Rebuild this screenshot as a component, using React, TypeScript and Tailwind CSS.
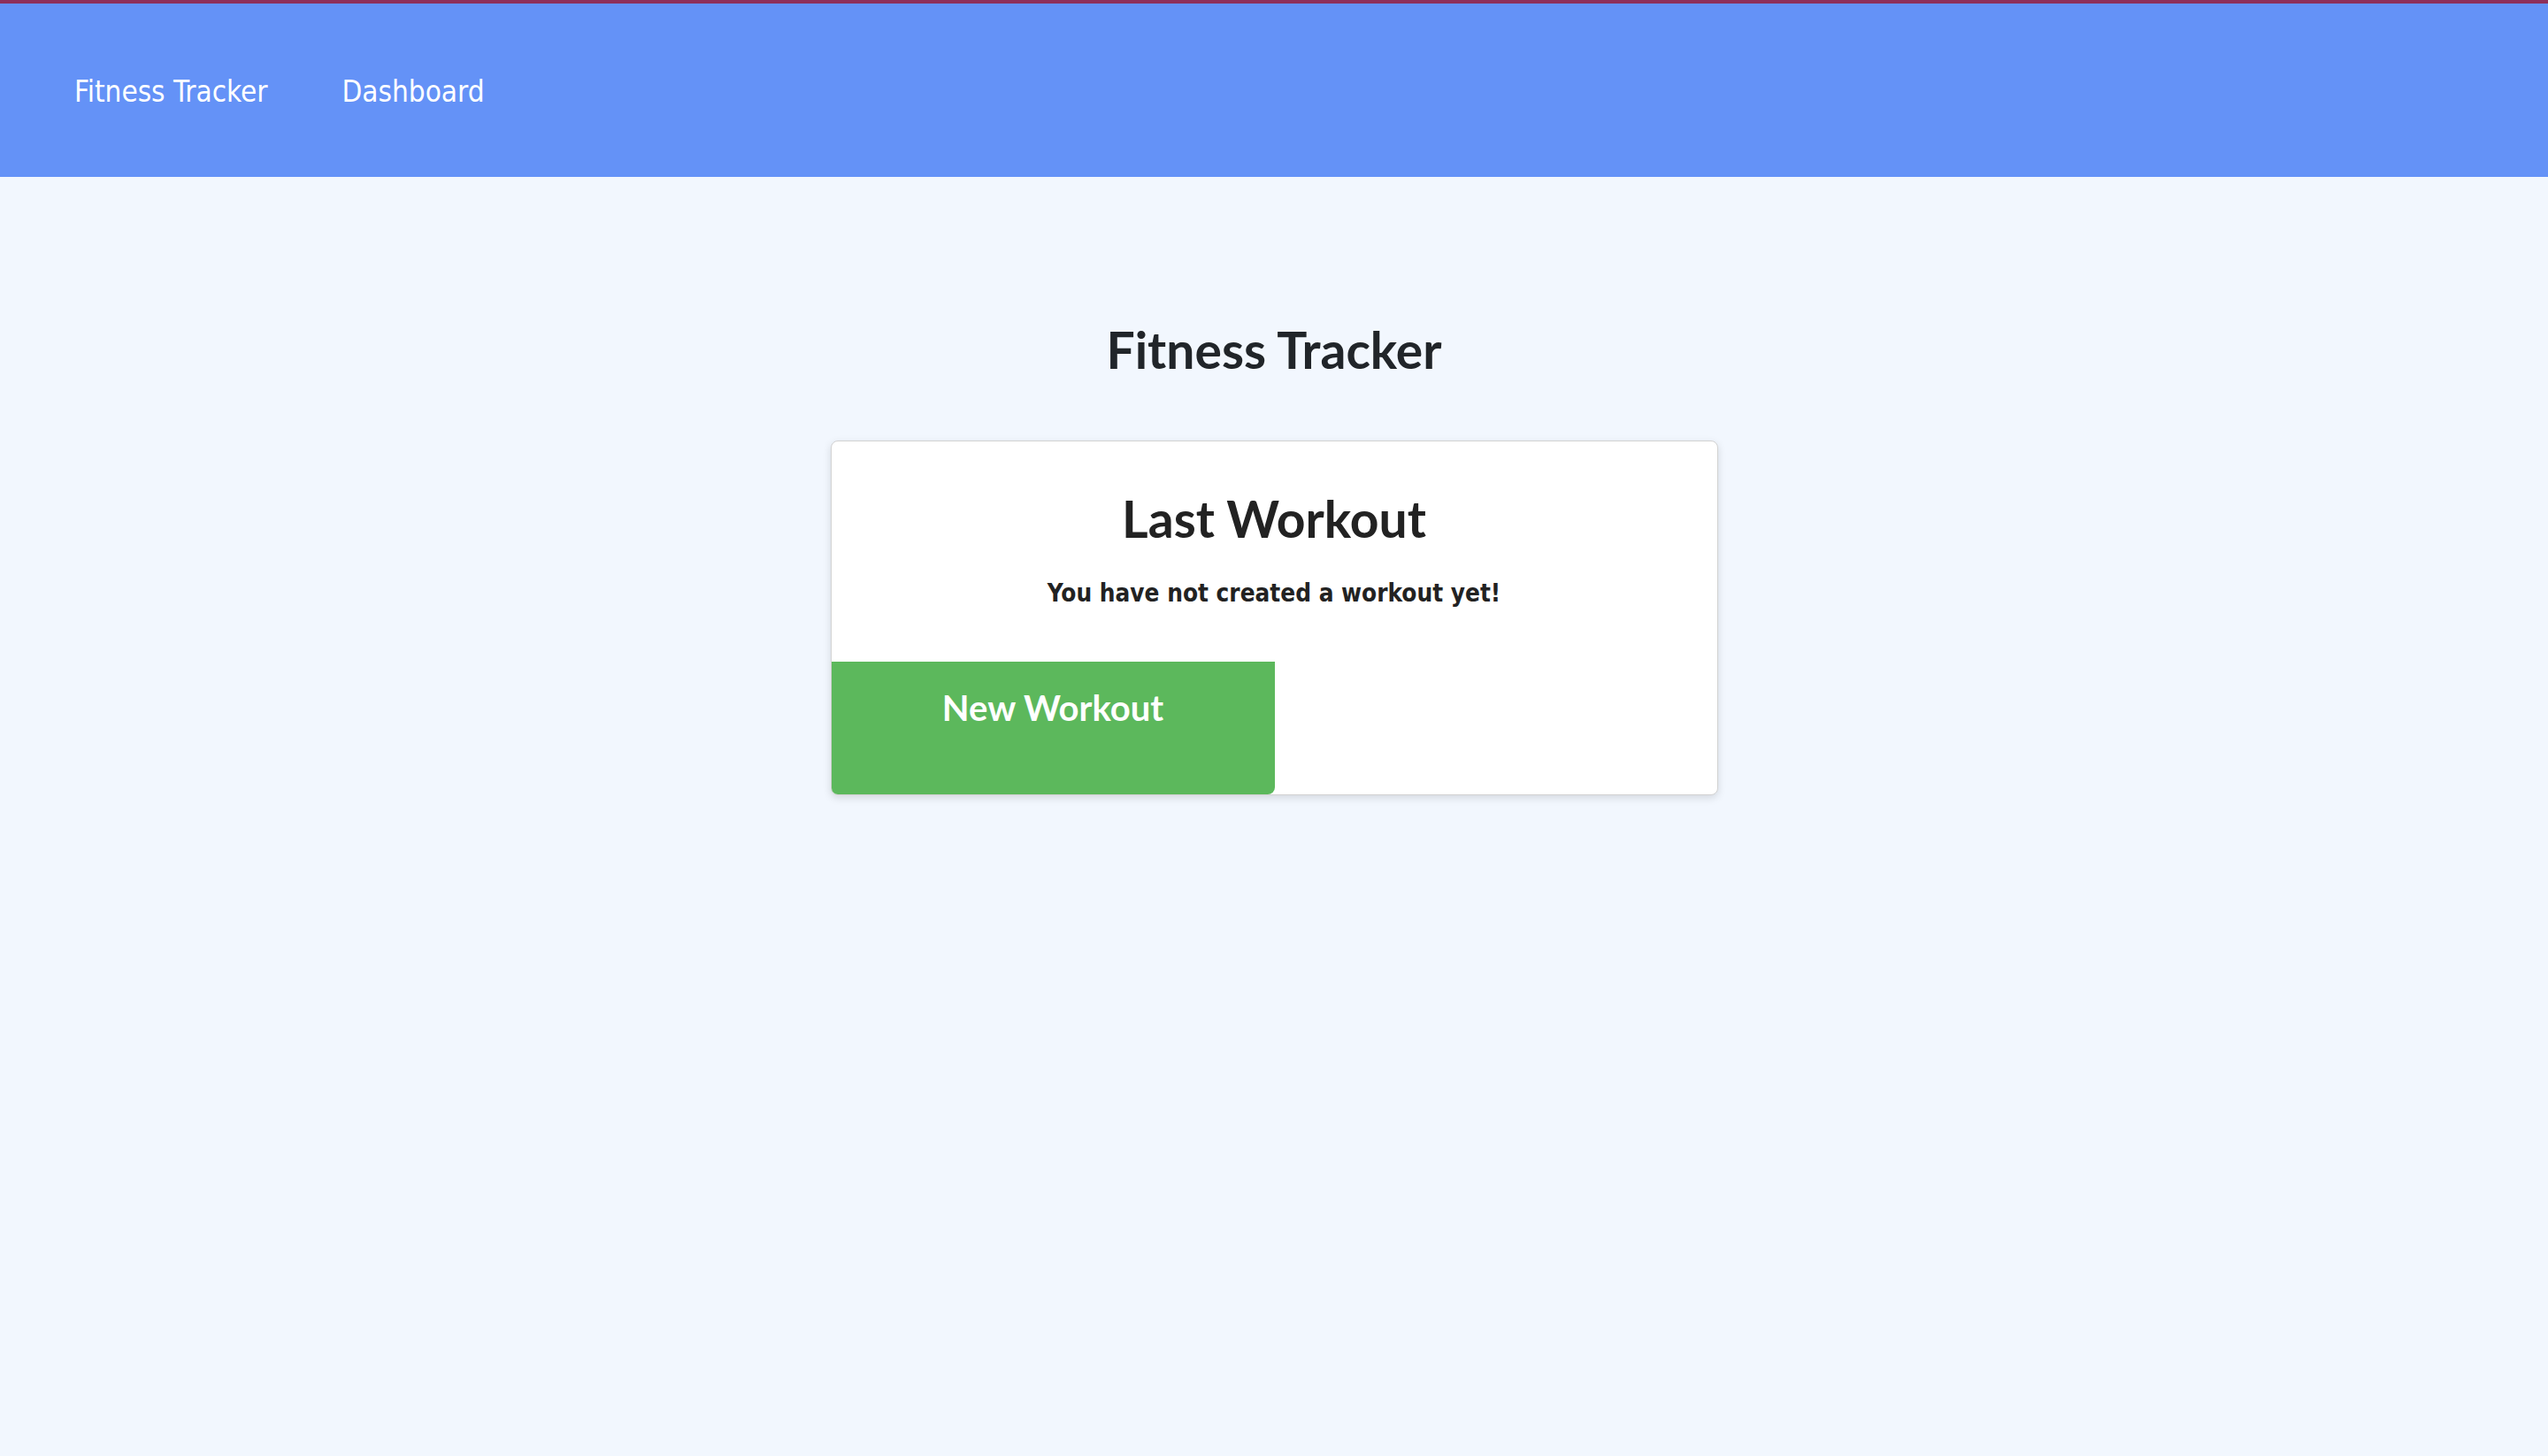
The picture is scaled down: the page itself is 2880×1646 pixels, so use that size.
import React from "react";

const navFont = { fontFamily: '"DejaVu Sans Condensed", "DejaVu Sans", Tahoma, sans-serif' };
const headFont = { fontFamily: 'Lato, "Noto Sans", sans-serif' };

function NavBar() {
  return (
    <nav
      className="flex h-[200px] items-center gap-[84px] border-t-4 border-[#8e2f5b] bg-[#6492f7] pl-[84px] pt-[3px] text-[33px] text-white"
      style={navFont}
    >
      <a className="leading-none">Fitness Tracker</a>
      <a className="leading-none">Dashboard</a>
    </nav>
  );
}

function LastWorkoutCard() {
  return (
    <div className="w-[1003px] overflow-hidden rounded-lg border border-[#d2d2d2] bg-white shadow-[0_3px_10px_rgba(0,0,0,0.13)]">
      <div className="pt-[53px] text-center">
        <h2 className="text-[57px] font-bold leading-[1.2] text-[#222]" style={headFont}>
          Last Workout
        </h2>
        <p className="mt-[33px] text-[27.7px] font-bold leading-[1.2] text-[#222]" style={navFont}>
          You have not created a workout yet!
        </p>
      </div>
      <a
        className="mt-[61px] block h-[150px] w-[501px] cursor-pointer rounded-br-lg bg-[#5cb85c] pt-[28px] text-center text-[40px] font-bold leading-[1.2] text-white"
        style={headFont}
      >
        New Workout
      </a>
    </div>
  );
}

export default function App() {
  return (
    <div className="min-h-[1646px] bg-[#f2f7fe]">
      <NavBar />
      <main className="flex flex-col items-center">
        <h1 className="mt-[161px] text-[57px] font-bold leading-[1.2] text-[#212529]" style={headFont}>
          Fitness Tracker
        </h1>
        <div className="mt-[69px]">
          <LastWorkoutCard />
        </div>
      </main>
    </div>
  );
}
